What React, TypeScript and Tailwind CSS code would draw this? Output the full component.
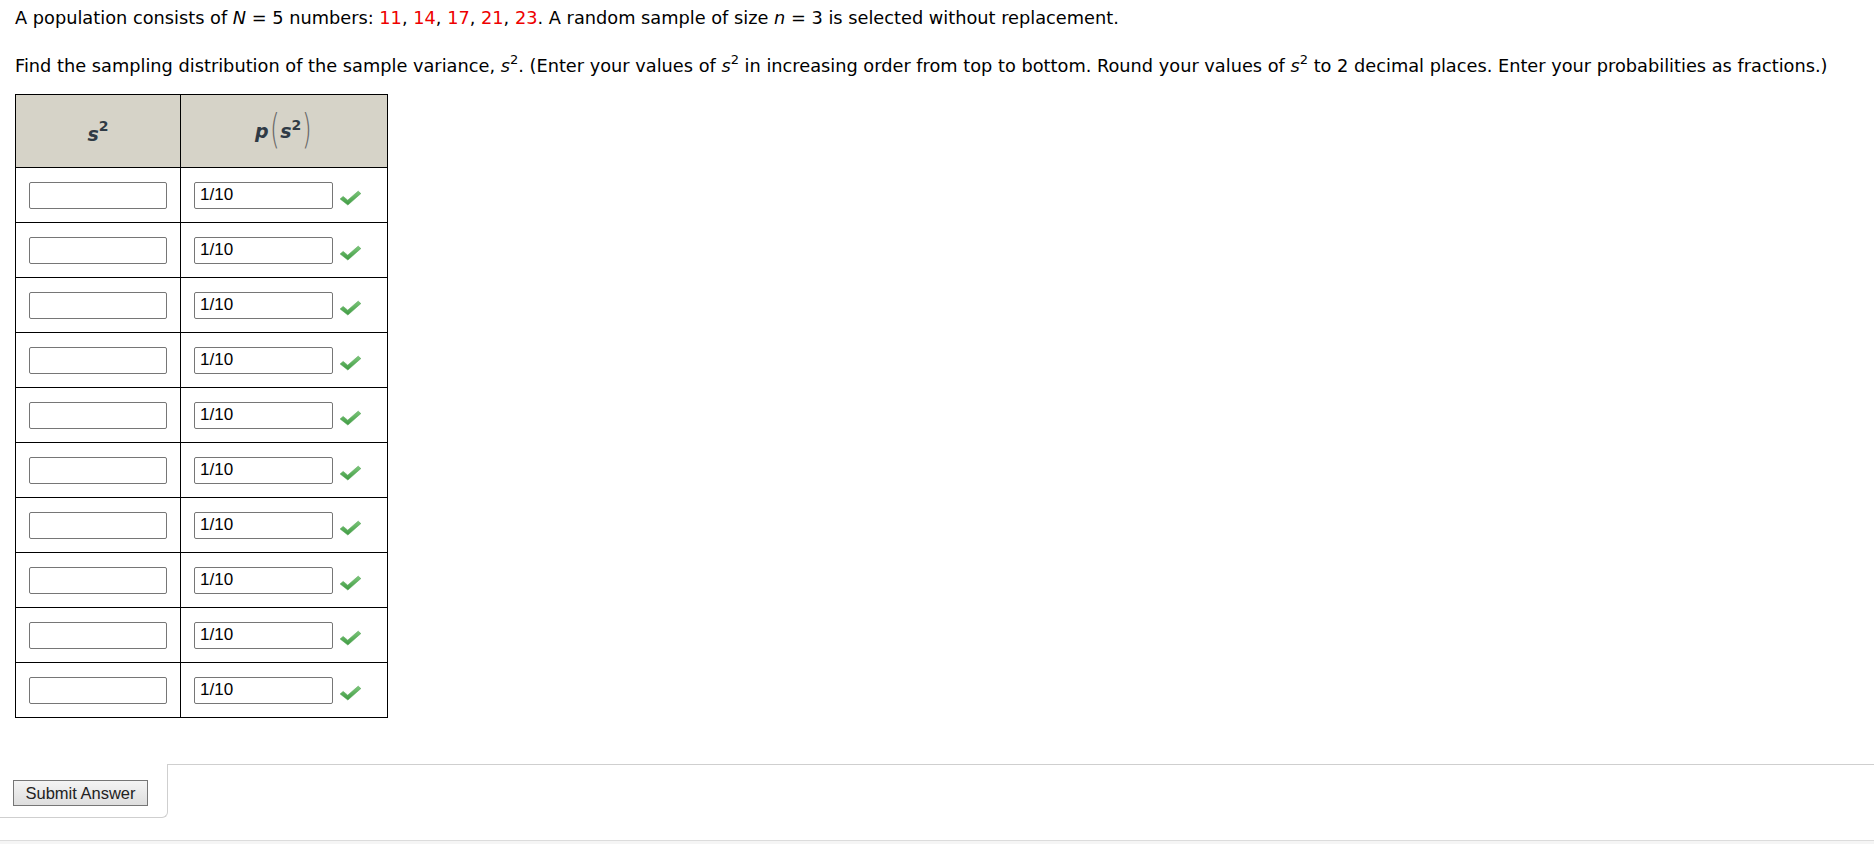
import React from "react";

function Check() {
  return (
    <svg width="23" height="16" viewBox="0 0 24 17" className="shrink-0">
      <defs>
        <linearGradient id="cg" x1="0" y1="0" x2="0" y2="1">
          <stop offset="0" stopColor="#7cc87a" />
          <stop offset="1" stopColor="#3f9a42" />
        </linearGradient>
      </defs>
      <path
        d="M1 9.5 L4.2 6.8 L9 10.8 L20.2 1.2 L23 3.8 L9.2 16 Z"
        fill="url(#cg)"
        stroke="#4a9e4b"
        strokeWidth="0.6"
        strokeLinejoin="round"
      />
    </svg>
  );
}

function Row() {
  return (
    <tr className="h-[55px]">
      <td className="border border-black px-[13px] align-middle">
        <input
          type="text"
          className="block w-[138px] h-[27px] border border-[#767676] rounded-[2px] bg-white px-[5px] outline-none"
        />
      </td>
      <td className="border border-black pl-[13px] pr-[22px] align-middle">
        <div className="flex items-center gap-[6px]">
          <input
            type="text"
            defaultValue="1/10"
            className="block w-[139px] h-[27px] border border-[#767676] rounded-[2px] bg-white px-[5px] text-[17px] text-black outline-none [font-family:'Liberation_Sans',Arial,sans-serif]"
          />
          <div className="mt-[6px]">
            <Check />
          </div>
        </div>
      </td>
    </tr>
  );
}

function Sup() {
  return <sup className="text-[13px] not-italic relative -top-[8px]">2</sup>;
}

function Paren({ c }: { c: string }) {
  return (
    <span className="inline-block font-extralight text-[40px] leading-none text-[#666] -mt-[4px] [font-family:'DejaVu_Sans',sans-serif] scale-x-[0.62] -mx-[2px]">
      {c}
    </span>
  );
}

export default function App() {
  const rows = Array.from({ length: 10 }, (_, i) => i);
  const red = "text-[#ee0000]";
  return (
    <div className="w-[1874px] h-[844px] bg-white text-black overflow-hidden flex flex-col [font-family:'DejaVu_Sans',Verdana,sans-serif] text-[17.75px]">
      <div className="pl-[15px] pt-[7px]">
        <p className="leading-[22px] whitespace-nowrap">
          A population consists of <i>N</i> = 5 numbers:{" "}
          <span className={red}>11</span>, <span className={red}>14</span>,{" "}
          <span className={red}>17</span>, <span className={red}>21</span>,{" "}
          <span className={red}>23</span>. A random sample of size <i>n</i> = 3 is
          selected without replacement.
        </p>
        <p className="leading-[22px] mt-[26px] whitespace-nowrap">
          Find the sampling distribution of the sample variance, <i>s</i>
          <Sup />. (Enter your values of <i>s</i>
          <Sup /> in increasing order from top to bottom. Round your values of{" "}
          <i>s</i>
          <Sup /> to 2 decimal places. Enter your probabilities as fractions.)
        </p>
        <table className="border-collapse mt-[17px] ml-0">
          <thead>
            <tr className="h-[73px] bg-[#d6d3c8]">
              <th className="border border-black w-[164px] align-middle font-normal">
                <span className="inline-flex items-start text-[#2f3a45] font-bold italic text-[19px] [font-family:'DejaVu_Sans',Verdana,sans-serif] pt-[6px]">
                  s
                  <span className="not-italic text-[14px] leading-none -mt-[1px]">2</span>
                </span>
              </th>
              <th className="border border-black w-[207px] align-middle font-normal">
                <span className="inline-flex items-center text-[#2f3a45] font-bold text-[19px] [font-family:'DejaVu_Sans',Verdana,sans-serif]">
                  <span className="italic">p</span>
                  <Paren c="(" />
                  <span className="italic">s</span>
                  <span className="text-[14px] leading-none -mt-[12px]">2</span>
                  <Paren c=")" />
                </span>
              </th>
            </tr>
          </thead>
          <tbody>
            {rows.map((i) => (
              <Row key={i} />
            ))}
          </tbody>
        </table>
      </div>
      <div className="mt-[46px] flex">
        <div className="w-[168px] h-[54px] border-r border-b border-[#cfcfcf] rounded-br-[6px] pl-[13px] pt-[16px]">
          <button className="h-[26px] w-[135px] border border-[#767676] bg-gradient-to-b from-[#f4f4f4] to-[#dedede] text-[16.5px] text-[#222] leading-none [font-family:'Liberation_Sans',Arial,sans-serif]">
            Submit Answer
          </button>
        </div>
        <div className="flex-1 border-t border-[#cfcfcf]"></div>
      </div>
      <div className="mt-[22px] flex-1 border-t border-[#dcdcdc] bg-[#f5f5f5]"></div>
    </div>
  );
}
